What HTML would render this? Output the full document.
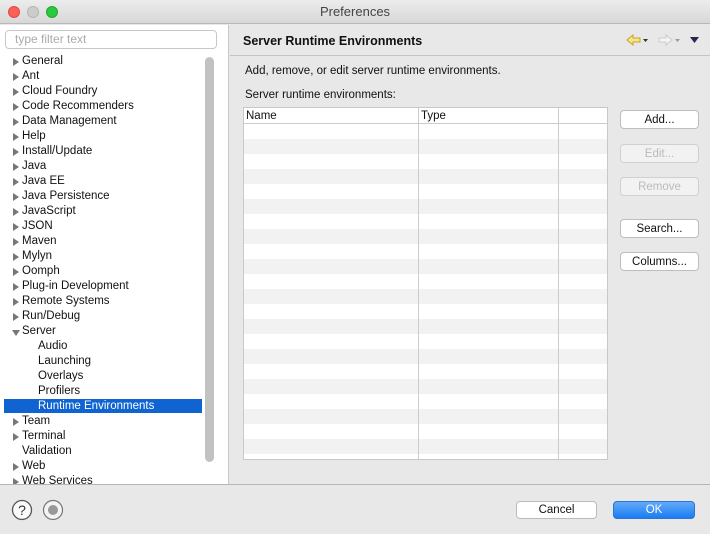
<!DOCTYPE html>
<html><head><style>
*{margin:0;padding:0;box-sizing:border-box}
body{width:710px;height:534px;background:#e8e8e8;font-family:"Liberation Sans",sans-serif;font-size:11.5px;color:#111;position:relative;overflow:hidden}
.abs{position:absolute}
.title{left:0;top:0;width:710px;height:24px;background:linear-gradient(#ececec,#d8d8d8);border-bottom:1px solid #b8b8b8;text-align:center;line-height:24px;font-size:13px;color:#444}
.dot{width:12px;height:12px;border-radius:50%;top:6px}
.left{left:0;top:25px;width:229px;height:459px;background:#fff;border-right:1px solid #c8c8c8}
.filter{left:5px;top:30px;width:212px;height:19px;border:1px solid #c8c8c8;border-radius:4px;background:#fff;color:#aaa;font-size:12px;line-height:17px;padding-left:9px}
.row{position:absolute;left:0;height:15px;line-height:15px;white-space:nowrap}
.tri{position:absolute;left:13px;top:4px;width:0;height:0;border-left:6px solid #777;border-top:4px solid transparent;border-bottom:4px solid transparent}
.trid{position:absolute;left:12px;top:6px;border-top:6px solid #777;border-left:4px solid transparent;border-right:4px solid transparent}
.btn{position:absolute;left:620px;width:79px;height:19px;background:#fff;border:1px solid #bdbdbd;border-radius:4px;text-align:center;line-height:18px;font-size:11.5px}
.dis{color:#bbb;background:#f2f2f2;border-color:#d0d0d0}
</style></head><body>
<div class="abs title">Preferences</div>
<div class="abs dot" style="left:8px;background:#fc5f57;border:1px solid #de4a42"></div>
<div class="abs dot" style="left:27px;background:#ccc;border:1px solid #b5b5b5"></div>
<div class="abs dot" style="left:46px;background:#2ac940;border:1px solid #1ea832"></div>
<div class="abs left"></div>
<div class="abs filter">type filter text</div>
<div class="abs" style="left:205px;top:57px;width:9px;height:405px;background:#c2c2c2;border-radius:5px"></div>
<div class="abs" style="left:4px;top:399px;width:198px;height:14px;background:#0f64d2"></div>
<div class="abs" style="left:0;top:54px;width:205px;height:430px;overflow:hidden">
<div class="row" style="top:0"><span class="tri"></span><span style="margin-left:22px">General</span></div>
<div class="row" style="top:15px"><span class="tri"></span><span style="margin-left:22px">Ant</span></div>
<div class="row" style="top:30px"><span class="tri"></span><span style="margin-left:22px">Cloud Foundry</span></div>
<div class="row" style="top:45px"><span class="tri"></span><span style="margin-left:22px">Code Recommenders</span></div>
<div class="row" style="top:60px"><span class="tri"></span><span style="margin-left:22px">Data Management</span></div>
<div class="row" style="top:75px"><span class="tri"></span><span style="margin-left:22px">Help</span></div>
<div class="row" style="top:90px"><span class="tri"></span><span style="margin-left:22px">Install/Update</span></div>
<div class="row" style="top:105px"><span class="tri"></span><span style="margin-left:22px">Java</span></div>
<div class="row" style="top:120px"><span class="tri"></span><span style="margin-left:22px">Java EE</span></div>
<div class="row" style="top:135px"><span class="tri"></span><span style="margin-left:22px">Java Persistence</span></div>
<div class="row" style="top:150px"><span class="tri"></span><span style="margin-left:22px">JavaScript</span></div>
<div class="row" style="top:165px"><span class="tri"></span><span style="margin-left:22px">JSON</span></div>
<div class="row" style="top:180px"><span class="tri"></span><span style="margin-left:22px">Maven</span></div>
<div class="row" style="top:195px"><span class="tri"></span><span style="margin-left:22px">Mylyn</span></div>
<div class="row" style="top:210px"><span class="tri"></span><span style="margin-left:22px">Oomph</span></div>
<div class="row" style="top:225px"><span class="tri"></span><span style="margin-left:22px">Plug-in Development</span></div>
<div class="row" style="top:240px"><span class="tri"></span><span style="margin-left:22px">Remote Systems</span></div>
<div class="row" style="top:255px"><span class="tri"></span><span style="margin-left:22px">Run/Debug</span></div>
<div class="row" style="top:270px"><span class="trid"></span><span style="margin-left:22px">Server</span></div>
<div class="row" style="top:285px"><span style="margin-left:38px">Audio</span></div>
<div class="row" style="top:300px"><span style="margin-left:38px">Launching</span></div>
<div class="row" style="top:315px"><span style="margin-left:38px">Overlays</span></div>
<div class="row" style="top:330px"><span style="margin-left:38px">Profilers</span></div>
<div class="row" style="top:345px;color:#fff"><span style="margin-left:38px">Runtime Environments</span></div>
<div class="row" style="top:360px"><span class="tri"></span><span style="margin-left:22px">Team</span></div>
<div class="row" style="top:375px"><span class="tri"></span><span style="margin-left:22px">Terminal</span></div>
<div class="row" style="top:390px"><span style="margin-left:22px">Validation</span></div>
<div class="row" style="top:405px"><span class="tri"></span><span style="margin-left:22px">Web</span></div>
<div class="row" style="top:420px"><span class="tri"></span><span style="margin-left:22px">Web Services</span></div>
</div>
<div class="abs" style="left:230px;top:55px;width:480px;height:1px;background:#c4c4c4"></div>
<div class="abs" style="left:243px;top:34px;font-weight:bold;font-size:12.5px">Server Runtime Environments</div>
<svg class="abs" style="left:626px;top:33px" width="80" height="14">
<path d="M1 7 L7 2 V5 H14 V9 H7 V12 Z" fill="#f6e58a" stroke="#c9a227"/>
<path d="M17 6 h5 l-2.5 3z" fill="#333"/>
<path d="M46 7 L40 2 V5 H33 V9 H40 V12 Z" fill="#f4f4f4" stroke="#ccc"/>
<path d="M49 6 h5 l-2.5 3z" fill="#999"/>
<path d="M64 4 h9 l-4.5 6z" fill="#2a2550"/>
</svg>
<div class="abs" style="left:245px;top:65px">Add, remove, or edit server runtime environments.</div>
<div class="abs" style="left:245px;top:89px">Server runtime environments:</div>
<div class="abs" style="left:243px;top:107px;width:365px;height:353px;border:1px solid #c8c8c8;background:repeating-linear-gradient(#fff 0 15px,#f2f2f2 15px 30px);background-position:0 16px;overflow:hidden">
<div style="height:16px;background:#fff;border-bottom:1px solid #ccc;line-height:16px;padding-left:2px;position:relative">Name<span style="position:absolute;left:177px">Type</span></div>
<div class="abs" style="left:174px;top:0;width:1px;height:353px;background:#ccc"></div>
<div class="abs" style="left:314px;top:0;width:1px;height:353px;background:#ccc"></div>
</div>
<div class="btn" style="top:110px">Add...</div>
<div class="btn dis" style="top:144px">Edit...</div>
<div class="btn dis" style="top:177px">Remove</div>
<div class="btn" style="top:219px">Search...</div>
<div class="btn" style="top:252px">Columns...</div>
<div class="abs" style="left:0;top:484px;width:710px;height:1px;background:#b5b5b5"></div>
<svg class="abs" style="left:11px;top:499px" width="60" height="22">
<circle cx="11" cy="11" r="9.5" fill="#fafafa" stroke="#555" stroke-width="1.3"/>
<text x="11" y="16" font-size="14" text-anchor="middle" fill="#333" font-family="Liberation Sans">?</text>
<circle cx="42" cy="11" r="9.5" fill="#f4f4f4" stroke="#777" stroke-width="1.2"/>
<circle cx="42" cy="11" r="5" fill="#999"/>
</svg>
<div class="abs" style="left:516px;top:501px;width:81px;height:18px;background:#fff;border:1px solid #bbb;border-radius:4px;text-align:center;line-height:17px">Cancel</div>
<div class="abs" style="left:613px;top:501px;width:82px;height:18px;background:linear-gradient(#63aaf9,#1a7cf2);border:1px solid #2a73d8;border-radius:4px;text-align:center;line-height:17px;color:#fff">OK</div>
</body></html>
